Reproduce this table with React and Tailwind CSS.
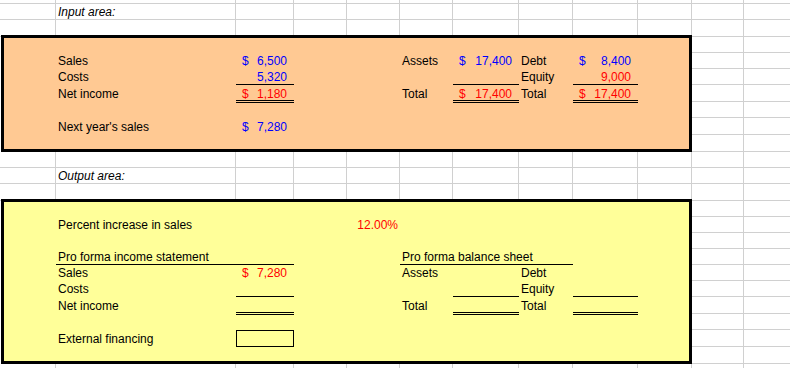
import React from 'react';

// sheet columns, widths include the 1px gridline on the right
const GRID = 'grid grid-cols-[56px_180px_58px_53px_53px_53px_66px_54px_65px_54px_52px_46px]';
// same columns seen from inside a 3px bordered box
const BOX_GRID = 'grid grid-cols-[52px_180px_58px_53px_53px_53px_66px_54px_65px_51px]';
const SIDE_GRID = 'grid grid-cols-[52px_46px]';

const H = { 4: 'h-1', 14: 'h-3.5', 15: 'h-[15px]', 16: 'h-4', 17: 'h-[17px]' };

const BLUE = 'text-[#0000ff]';
const RED = 'text-[#ff0000]';

const SINGLE = 'shadow-[inset_0_-1px_0_#000]';
const BOXED = 'shadow-[inset_0_0_0_1px_#000]';
const DOUBLE_ORANGE = 'shadow-[inset_0_-1px_0_#ffc993,inset_0_-2px_0_#000,0_1px_0_#000]';
const DOUBLE_YELLOW = 'shadow-[inset_0_-1px_0_#ffff99,inset_0_-2px_0_#000,0_1px_0_#000]';

const inputRows = [
    { h: 15 },
    {
        h: 16, cells: {
            1: { text: 'Sales' },
            2: { type: 'acct', text: '6,500', color: BLUE },
            5: { text: 'Assets' },
            6: { type: 'acct', text: '17,400', color: BLUE },
            7: { text: 'Debt' },
            8: { type: 'acct', text: '8,400', color: BLUE },
        }
    },
    {
        h: 16, cells: {
            1: { text: 'Costs' },
            2: { type: 'num', text: '5,320', color: BLUE, line: 'single' },
            6: { line: 'single' },
            7: { text: 'Equity' },
            8: { type: 'num', text: '9,000', color: RED, line: 'single' },
        }
    },
    {
        h: 17, cells: {
            1: { text: 'Net income' },
            2: { type: 'acct', text: '1,180', color: RED, line: 'double' },
            5: { text: 'Total' },
            6: { type: 'acct', text: '17,400', color: RED, line: 'double' },
            7: { text: 'Total' },
            8: { type: 'acct', text: '17,400', color: RED, line: 'double' },
        }
    },
    { h: 16 },
    {
        h: 17, cells: {
            1: { text: "Next year's sales" },
            2: { type: 'acct', text: '7,280', color: BLUE },
        }
    },
    { h: 14 },
];

const outputRows = [
    { h: 15 },
    {
        h: 16, cells: {
            1: { text: 'Percent increase in sales' },
            4: { type: 'pct', text: '12.00%', color: RED },
        }
    },
    { h: 16 },
    {
        h: 16, cells: {
            1: { text: 'Pro forma income statement', line: 'single' },
            2: { line: 'single' },
            5: { text: 'Pro forma balance sheet', line: 'single' },
            6: { line: 'single' },
            7: { line: 'single' },
        }
    },
    {
        h: 16, cells: {
            1: { text: 'Sales' },
            2: { type: 'acct', text: '7,280', color: RED },
            5: { text: 'Assets' },
            7: { text: 'Debt' },
        }
    },
    {
        h: 16, cells: {
            1: { text: 'Costs' },
            2: { line: 'single' },
            6: { line: 'single' },
            7: { text: 'Equity' },
            8: { line: 'single' },
        }
    },
    {
        h: 17, cells: {
            1: { text: 'Net income' },
            2: { line: 'double' },
            5: { text: 'Total' },
            6: { line: 'double' },
            7: { text: 'Total' },
            8: { line: 'double' },
        }
    },
    { h: 16 },
    {
        h: 17, cells: {
            1: { text: 'External financing' },
            2: { line: 'box' },
        }
    },
    { h: 14 },
];

const Cell = ({ spec, dbl }) => {
    if (!spec) return <div />;
    let line = '';
    if (spec.line === 'single') line = SINGLE;
    if (spec.line === 'double') line = dbl;
    if (spec.line === 'box') line = BOXED;

    let align = 'pl-[2px]';
    if (spec.type === 'acct') align = 'justify-between pl-[6px] pr-[7px]';
    if (spec.type === 'num') align = 'justify-end pr-[7px]';
    if (spec.type === 'pct') align = 'justify-end pr-[2px]';

    return (
        <div className={`flex items-end whitespace-nowrap pb-px ${align} ${line} ${spec.color || ''}`}>
            {spec.type === 'acct' && <span>$</span>}
            {spec.text && <span>{spec.text}</span>}
        </div>
    );
};

const PlainRow = ({ h, label, last }) => (
    <div className={`${GRID} ${H[h]}`}>
        {Array.from({ length: 12 }, (_, c) => (
            <div
                key={c}
                className={`flex items-end border-[#d0d0d0] ${c < 11 ? 'border-r' : ''} ${last ? '' : 'border-b'}`}
            >
                {c === 1 && label && <span className="pl-[2px] italic">{label}</span>}
            </div>
        ))}
    </div>
);

const Side = ({ heights }) => (
    <div className="flex flex-col">
        {heights.map((h, i) => (
            <div key={i} className={`${SIDE_GRID} ${H[h]}`}>
                <div className="border-r border-b border-[#d0d0d0]" />
                <div className="border-b border-[#d0d0d0]" />
            </div>
        ))}
    </div>
);

const Box = ({ rows, fill, dbl, sideHeights }) => (
    <div className="flex">
        <div className="flex w-[692px] flex-col">
            <div className={`-mt-[2px] ml-px w-[691px] border-[3px] border-black ${fill}`}>
                {rows.map((r, i) => (
                    <div key={i} className={`${BOX_GRID} ${H[r.h]}`}>
                        {Array.from({ length: 10 }, (_, c) => (
                            <Cell key={c} spec={r.cells ? r.cells[c] : null} dbl={dbl} />
                        ))}
                    </div>
                ))}
            </div>
        </div>
        <Side heights={sideHeights} />
    </div>
);

export default function App() {
    return (
        <div className="flex h-[368px] w-[790px] flex-col overflow-hidden bg-white font-['Liberation_Sans',Arial,sans-serif] text-[12px] leading-[14px] text-black">
            <PlainRow h={4} />
            <PlainRow h={16} label="Input area:" />
            <PlainRow h={17} />
            <Box rows={inputRows} fill="bg-[#ffc993]" dbl={DOUBLE_ORANGE} sideHeights={[16, 16, 16, 17, 16, 17, 17]} />
            <PlainRow h={16} />
            <PlainRow h={16} label="Output area:" />
            <PlainRow h={17} />
            <Box rows={outputRows} fill="bg-[#ffff99]" dbl={DOUBLE_YELLOW} sideHeights={[16, 16, 16, 16, 16, 16, 17, 16, 17, 17]} />
            <PlainRow h={4} last />
        </div>
    );
}
